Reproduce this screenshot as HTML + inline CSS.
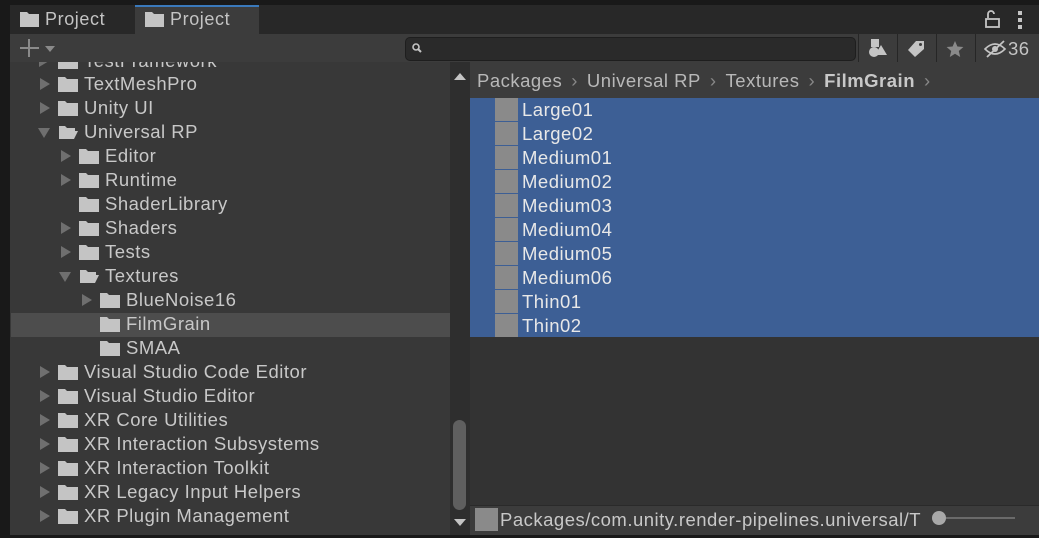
<!DOCTYPE html>
<html><head><meta charset="utf-8"><style>
*{margin:0;padding:0;box-sizing:border-box}
body{width:1039px;height:538px;overflow:hidden;background:#191919;font-family:"Liberation Sans",sans-serif;color:#c8c8c8;position:relative}
.a{position:absolute}
.row{position:absolute;height:24px;line-height:24px;font-size:18.5px;letter-spacing:0.5px;white-space:nowrap}
.tri{position:absolute;top:7px;width:0;height:0}
.tr{border-left:10px solid #6f6f6f;border-top:6px solid transparent;border-bottom:6px solid transparent;top:6px}
.td{border-top:10px solid #6f6f6f;border-left:6px solid transparent;border-right:6px solid transparent;top:8px}
.fold{position:absolute;top:5px}
.it{position:absolute;left:495px;width:23px;height:23px;background:#8a8a8a}
.it2{position:absolute;left:522px;font-size:18.5px;letter-spacing:0.5px;color:#e8e8e8;height:24px;line-height:24px}
.ch{color:#888;margin:0 9px}
</style></head><body>
<div class="a" style="left:10px;top:5px;width:1029px;height:29px;background:#282828"></div>
<div class="a" style="left:135px;top:5px;width:124px;height:29px;background:#3c3c3c;border-top:2px solid #3a79bb"></div>
<svg class="a" style="left:20px;top:12px" width="19" height="15"><path d="M0 0h7l2 2h10v13H0z" fill="#c4c4c4"/></svg>
<div class="a" style="left:45px;top:9px;font-size:18px;letter-spacing:0.6px;color:#c4c4c4">Project</div>
<svg class="a" style="left:145px;top:12px" width="19" height="15"><path d="M0 0h7l2 2h10v13H0z" fill="#c4c4c4"/></svg>
<div class="a" style="left:170px;top:9px;font-size:18px;letter-spacing:0.6px;color:#c4c4c4">Project</div>
<svg class="a" style="left:985px;top:10px" width="16" height="18"><path d="M3 8V4a3 3 0 0 1 6 0" fill="none" stroke="#c4c4c4" stroke-width="1.8"/><rect x="1" y="9" width="13" height="8" fill="none" stroke="#c4c4c4" stroke-width="1.8"/></svg>
<div class="a" style="left:1018px;top:11px;width:4px;height:4px;background:#c4c4c4;box-shadow:0 7px 0 #c4c4c4,0 14px 0 #c4c4c4"></div>
<div class="a" style="left:10px;top:34px;width:1029px;height:28px;background:#3c3c3c"></div>
<div class="a" style="left:20px;top:47px;width:19px;height:2px;background:#8a8a8a"></div>
<div class="a" style="left:28px;top:39px;width:2px;height:18px;background:#8a8a8a"></div>
<div class="a" style="left:45px;top:46px;border-top:6px solid #8a8a8a;border-left:5px solid transparent;border-right:5px solid transparent"></div>
<div class="a" style="left:405px;top:37px;width:451px;height:24px;background:#2a2a2a;border:1px solid #1e1e1e;border-radius:5px"></div>
<svg class="a" style="left:412px;top:43px" width="10" height="10"><circle cx="4" cy="4" r="3" fill="none" stroke="#c4c4c4" stroke-width="1.6"/><path d="M6 6l3 3" stroke="#c4c4c4" stroke-width="2"/></svg>
<div class="a" style="left:858px;top:34px;width:1px;height:28px;background:#262626"></div>
<div class="a" style="left:897px;top:34px;width:1px;height:28px;background:#262626"></div>
<div class="a" style="left:936px;top:34px;width:1px;height:28px;background:#262626"></div>
<div class="a" style="left:975px;top:34px;width:1px;height:28px;background:#262626"></div>
<svg class="a" style="left:867px;top:38px" width="22" height="20"><rect x="4" y="1" width="8" height="8" fill="#c4c4c4"/><circle cx="7" cy="14" r="5" fill="#c4c4c4"/><path d="M14 7l6 10h-12z" fill="#c4c4c4"/></svg>
<svg class="a" style="left:906px;top:40px" width="20" height="18"><path d="M10 1h8v8l-9 8-7-7z" fill="#c4c4c4"/><circle cx="14.5" cy="4.5" r="1.5" fill="#3c3c3c"/></svg>
<svg class="a" style="left:945px;top:40px" width="20" height="18"><path d="M10 1l2.4 5.5 6 .5-4.6 4 1.4 6-5.2-3.2L4.8 17l1.4-6-4.6-4 6-.5z" fill="#8a8a8a"/></svg>
<svg class="a" style="left:984px;top:40px" width="24" height="18"><path d="M1 9q10-10 20 0q-10 10-20 0z" fill="none" stroke="#c4c4c4" stroke-width="1.6"/><circle cx="11" cy="9" r="3" fill="#c4c4c4"/><path d="M3 17L20 1" stroke="#c4c4c4" stroke-width="1.8"/></svg>
<div class="a" style="left:1008px;top:38px;font-size:18.5px;letter-spacing:0.5px;color:#c4c4c4">36</div>
<div class="a" style="left:10px;top:62px;width:440px;height:476px;background:#383838;overflow:hidden">
<div class="row" style="left:0;top:-13px;width:440px"><div class="tri tr" style="left:29px"></div><svg class="fold" style="left:48px" width="20" height="15"><path d="M0 0h7l2 2h11v13H0z" fill="#c4c4c4"/></svg><span style="position:absolute;left:74px;color:#c8c8c8">TestFramework</span></div>
</div>
<div class="a" style="left:11px;top:313px;width:439px;height:24px;background:#4d4d4d"></div>
<div id="tree"></div>
<div class="a" style="left:450px;top:62px;width:20px;height:476px;background:#2e2e2e"></div>
<div class="a" style="left:454px;top:73px;border-bottom:7px solid #c4c4c4;border-left:6px solid transparent;border-right:6px solid transparent"></div>
<div class="a" style="left:453px;top:420px;width:13px;height:90px;background:#5f5f5f;border-radius:7px"></div>
<div class="a" style="left:454px;top:519px;border-top:7px solid #c4c4c4;border-left:6px solid transparent;border-right:6px solid transparent"></div>
<div class="a" style="left:470px;top:62px;width:569px;height:476px;background:#333"></div>
<div class="a" style="left:470px;top:62px;width:569px;height:36px;background:#3c3c3c"></div>
<div class="a" style="left:477px;top:70px;font-size:18.5px;letter-spacing:0.5px;color:#b8b8b8;white-space:nowrap">Packages<span class="ch">›</span>Universal RP<span class="ch">›</span>Textures<span class="ch">›</span><b style="color:#c8c8c8">FilmGrain</b><span class="ch">›</span></div>
<div class="a" style="left:470px;top:98px;width:569px;height:239px;background:#3d5f95"></div>
<div id="list"></div>
<div class="a" style="left:470px;top:505px;width:569px;height:30px;background:#3c3c3c;border-top:1px solid #2a2a2a"></div>
<div class="a" style="left:475px;top:508px;width:23px;height:23px;background:#8a8a8a"></div>
<div class="a" style="left:500px;top:509px;font-size:18.5px;letter-spacing:0.5px;color:#c8c8c8;white-space:nowrap">Packages/com.unity.render-pipelines.universal/T</div>
<div class="a" style="left:940px;top:517px;width:75px;height:2px;background:#6a6a6a"></div>
<div class="a" style="left:932px;top:511px;width:14px;height:14px;border-radius:50%;background:#a8a8a8"></div>
<div class="a" style="left:0;top:535px;width:1039px;height:3px;background:#191919"></div>
<script>
var t=[[1,'TextMeshPro','r'],[1,'Unity UI','r'],[1,'Universal RP','d'],[2,'Editor','r'],[2,'Runtime','r'],[2,'ShaderLibrary',''],[2,'Shaders','r'],[2,'Tests','r'],[2,'Textures','d'],[3,'BlueNoise16','r'],[3,'FilmGrain',''],[3,'SMAA',''],[1,'Visual Studio Code Editor','r'],[1,'Visual Studio Editor','r'],[1,'XR Core Utilities','r'],[1,'XR Interaction Subsystems','r'],[1,'XR Interaction Toolkit','r'],[1,'XR Legacy Input Helpers','r'],[1,'XR Plugin Management','r']];
var h='';t.forEach(function(r,i){var x=(r[0]-1)*21;var y=72+i*24;
h+='<div class="row" style="left:0;top:'+y+'px;width:450px">';
if(r[2]=='r')h+='<div class="tri tr" style="left:'+(40+x)+'px"></div>';
if(r[2]=='d')h+='<div class="tri td" style="left:'+(38+x)+'px"></div>';
if(r[2]=='d')h+='<svg class="fold" style="left:'+(58+x)+'px" width="21" height="15"><path d="M1 1h6l2 2h8v3H5L1 14z M5 6h15l-4 8H1z" fill="#c4c4c4"/></svg>';
else h+='<svg class="fold" style="left:'+(58+x)+'px" width="20" height="15"><path d="M0 0h7l2 2h11v13H0z" fill="#c4c4c4"/></svg>';
h+='<span style="position:absolute;left:'+(84+x)+'px;color:#c8c8c8">'+r[1]+'</span></div>';});
document.getElementById('tree').innerHTML=h;
var l=['Large01','Large02','Medium01','Medium02','Medium03','Medium04','Medium05','Medium06','Thin01','Thin02'];h='';
l.forEach(function(n,i){var y=98+i*24;h+='<div class="it" style="top:'+(y)+'px"></div><div class="it2" style="top:'+y+'px">'+n+'</div>';});
document.getElementById('list').innerHTML=h;
</script>
</body></html>
